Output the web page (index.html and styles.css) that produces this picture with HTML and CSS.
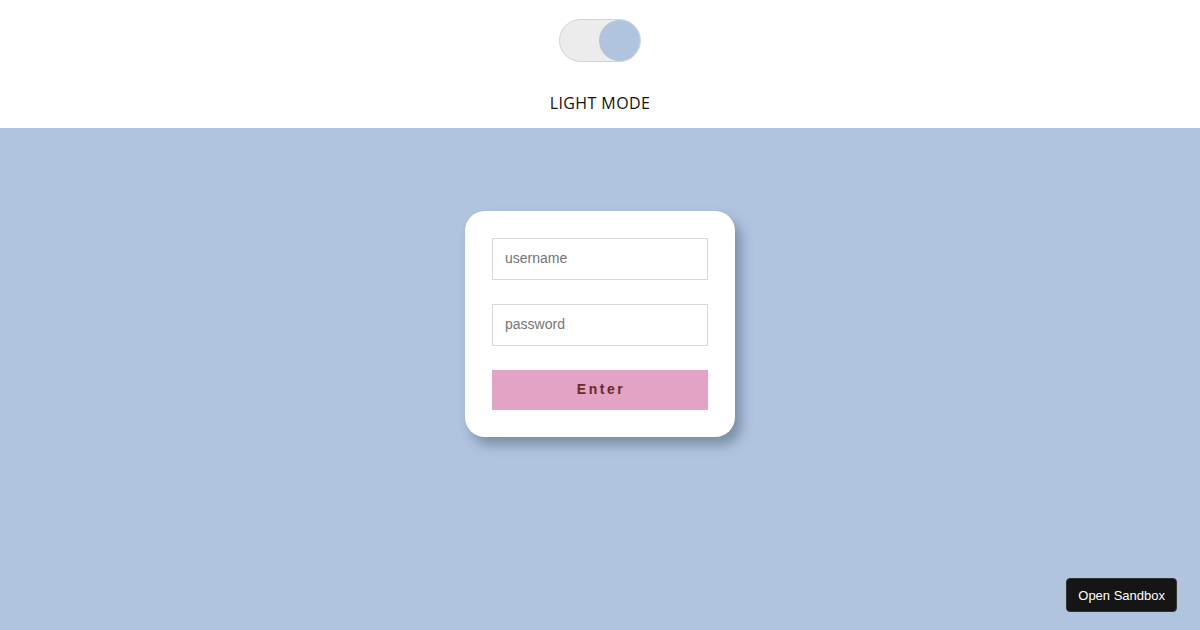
FILE: index.html
```html
<!DOCTYPE html>
<html lang="en">
<head>
  <meta charset="UTF-8">
  <meta name="viewport" content="width=device-width, initial-scale=1.0">
  <title>Login</title>
  <link rel="stylesheet" href="styles.css">
</head>
<body>
  <header class="top">
    <label class="switch">
      <input type="checkbox" checked>
      <span class="slider"></span>
    </label>
    <p class="mode">LIGHT MODE</p>
  </header>

  <main class="stage">
    <form class="card">
      <input class="field" type="text" placeholder="username">
      <input class="field" type="password" placeholder="password">
      <button class="enter" type="button">Enter</button>
    </form>
  </main>

  <a class="sandbox" href="#">Open Sandbox</a>
</body>
</html>
```

FILE: styles.css
```css
html, body {
  margin: 0;
  height: 100%;
}
body {
  font-family: "Liberation Sans", Arial, sans-serif;
  background-color: #B0C4DE;
  display: flex;
  flex-direction: column;
}
.top {
  background-color: #fff;
  height: 128px;
  display: flex;
  flex-direction: column;
  align-items: center;
  padding-top: 19px;
  box-sizing: border-box;
}
.switch {
  display: block;
  width: 82px;
  height: 43px;
}
.switch input {
  display: none;
}
.slider {
  display: flex;
  justify-content: flex-end;
  width: 100%;
  height: 100%;
  box-sizing: border-box;
  background-color: #ececec;
  border: 1px solid #cfd3d8;
  border-radius: 22px;
}
.slider::after {
  content: "";
  width: 41px;
  height: 41px;
  border-radius: 50%;
  background-color: #B0C4DE;
}
.mode {
  margin: 30px 0 0;
  font-family: "Open Sans", sans-serif;
  font-size: 16px;
  letter-spacing: 0.4px;
  color: #111;
}
.stage {
  flex: 1;
  display: flex;
  justify-content: center;
  padding-top: 83px;
}
.card {
  width: 270px;
  height: 226px;
  box-sizing: border-box;
  background-color: #fff;
  border-radius: 20px;
  padding: 27px;
  display: flex;
  flex-direction: column;
  gap: 24px;
  box-shadow: 6px 8px 12px rgba(60, 75, 100, 0.45);
}
.field {
  height: 42px;
  box-sizing: border-box;
  border: 1px solid #d6d6d6;
  padding: 0 12px 2px;
  font-family: "Liberation Sans", Arial, sans-serif;
  font-size: 14px;
  color: #333;
  outline: none;
}
.field::placeholder {
  color: #757575;
}
.enter {
  height: 40px;
  padding: 0 0 3px 2px;
  border: none;
  background-color: #E2A3C4;
  color: #6B2A2A;
  font-family: "Liberation Sans", Arial, sans-serif;
  font-size: 14px;
  font-weight: bold;
  letter-spacing: 2.5px;
  cursor: pointer;
}
.sandbox {
  position: fixed;
  right: 23px;
  bottom: 18px;
  background-color: #151515;
  color: #fff;
  font-size: 13px;
  text-decoration: none;
  padding: 9px 11px 8px;
  border-radius: 4px;
  border: 1px solid #333;
}
```
